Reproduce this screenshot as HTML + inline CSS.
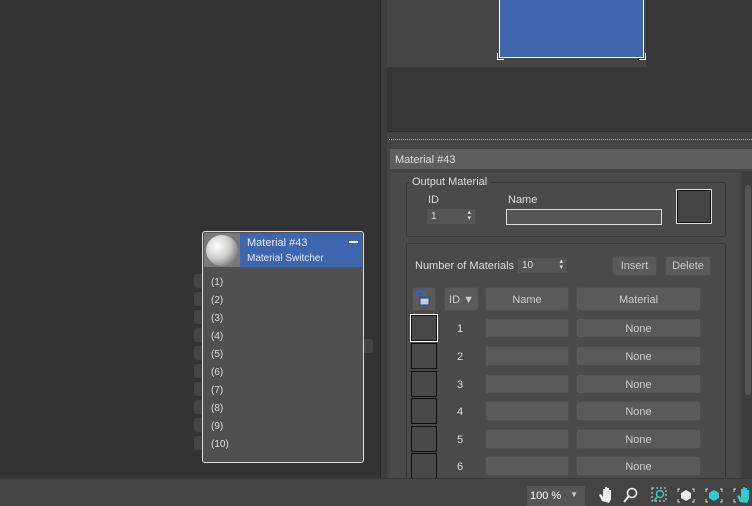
<!DOCTYPE html>
<html><head><style>
*{margin:0;padding:0;box-sizing:border-box}
body{width:752px;height:506px;overflow:hidden;background:#333;font-family:"Liberation Sans",sans-serif;font-size:11px;color:#ddd;position:relative}
.a{position:absolute}
.btn{position:absolute;background:#5a5a5a;border:1px solid #4e4e4e;border-radius:3px;text-align:center;color:#ccc;font-size:11px}
.sq{position:absolute;width:26px;height:26px;border:1px solid #111;background:#484848}
.lbl{position:absolute;font-size:10px;color:#ddd}
.sock{position:absolute;left:194px;width:9px;height:14px;background:#444;border-radius:3px 0 0 3px}
</style></head><body>
<div class="a" style="left:0;top:0;width:380px;height:478px;background:#333"></div>
<div class="a" style="left:380px;top:0;width:7px;height:478px;background:#3d3d3d;border-left:1px solid #2a2a2a"></div>
<div class="a" style="left:387px;top:0;width:365px;height:132px;background:#373737;border-bottom:1px solid #2b2b2b"></div>
<div class="a" style="left:387px;top:0;width:259px;height:67px;background:#454545"></div>
<div class="a" style="left:499px;top:0;width:145px;height:58px;background:#3f66ac;border:1px solid #fff;border-top:none"></div>
<div class="a" style="left:497px;top:53px;width:7px;height:7px;border-left:1px solid #fff;border-bottom:1px solid #fff"></div>
<div class="a" style="left:639px;top:53px;width:7px;height:7px;border-right:1px solid #fff;border-bottom:1px solid #fff"></div>
<div class="a" style="left:387px;top:132px;width:365px;height:346px;background:#444"></div>
<div class="a" style="left:389px;top:139px;width:363px;height:1px;border-top:1px dotted #aaa"></div>
<div class="a" style="left:390px;top:149px;width:362px;height:20px;background:#5e5e5e;color:#ddd;padding:5px 5px;font-size:11px">Material #43</div>
<div class="a" style="left:390px;top:172px;width:350px;height:306px;background:#4a4a4a"></div>
<div class="a" style="left:742px;top:172px;width:10px;height:306px;background:#3e3e3e"></div>
<div class="a" style="left:745px;top:185px;width:6px;height:210px;background:#555;border-radius:3px"></div>
<div class="a" style="left:406px;top:182px;width:320px;height:55px;border:1px solid #363636;border-radius:3px"></div>
<div class="a" style="left:409px;top:176px;background:#4a4a4a;padding:0 3px;font-size:11px">Output Material</div>
<div class="lbl" style="left:428px;top:194px;font-size:11px">ID</div>
<div class="lbl" style="left:508px;top:194px;font-size:11px">Name</div>
<div class="a" style="left:427px;top:209px;width:48px;height:15px;background:#555;font-size:10px;padding:2px 4px">1<span style="position:absolute;right:4px;top:1px;font-size:7px;line-height:6px">▴<br>▾</span></div>
<div class="a" style="left:506px;top:209px;width:156px;height:16px;background:#555;border:1px solid #ddd"></div>
<div class="a" style="left:676px;top:189px;width:36px;height:35px;border:1px solid #ddd;background:#444;outline:1px solid #111;outline-offset:-2px"></div>
<div class="a" style="left:406px;top:243px;width:320px;height:240px;border:1px solid #363636;border-radius:3px"></div>
<div class="a" style="left:415px;top:260px;font-size:11px">Number of Materials</div>
<div class="a" style="left:518px;top:258px;width:49px;height:15px;background:#555;font-size:10px;padding:2px 4px">10<span style="position:absolute;right:4px;top:1px;font-size:7px;line-height:6px">▴<br>▾</span></div>
<div class="btn" style="left:612px;top:256px;width:45px;height:20px;line-height:19px">Insert</div>
<div class="btn" style="left:665px;top:256px;width:46px;height:20px;line-height:19px">Delete</div>
<div class="btn" style="left:412px;top:287px;width:24px;height:24px"><svg width="22" height="22" viewBox="0 0 22 22"><path d="M3 10V7a4 4 0 0 1 8 0v2" fill="none" stroke="#3a5fd0" stroke-width="2"/><rect x="7" y="10" width="9" height="7" fill="#ccc" stroke="#2040b0"/></svg></div>
<div class="btn" style="left:444px;top:287px;width:35px;height:24px;line-height:24px">ID ▼</div>
<div class="btn" style="left:485px;top:287px;width:84px;height:24px;line-height:24px">Name</div>
<div class="btn" style="left:576px;top:287px;width:125px;height:24px;line-height:24px">Material</div>
<div class="sq" style="left:410px;top:314px;border:1px solid #fff;outline:1px solid #111;outline-offset:-2px;width:28px;height:28px"></div>
<div class="sq" style="left:411px;top:343px"></div>
<div class="sq" style="left:411px;top:371px"></div>
<div class="sq" style="left:411px;top:398px"></div>
<div class="sq" style="left:411px;top:426px"></div>
<div class="sq" style="left:411px;top:453px"></div>
<div class="a" style="left:457px;top:323px">1</div>
<div class="a" style="left:457px;top:351px">2</div>
<div class="a" style="left:457px;top:379px">3</div>
<div class="a" style="left:457px;top:406px">4</div>
<div class="a" style="left:457px;top:434px">5</div>
<div class="a" style="left:457px;top:461px">6</div>
<div class="btn" style="left:485px;top:318px;width:84px;height:20px;border-radius:1px"></div>
<div class="btn" style="left:576px;top:318px;width:125px;height:20px;line-height:20px">None</div>
<div class="btn" style="left:485px;top:346px;width:84px;height:20px;border-radius:1px"></div>
<div class="btn" style="left:576px;top:346px;width:125px;height:20px;line-height:20px">None</div>
<div class="btn" style="left:485px;top:374px;width:84px;height:20px;border-radius:1px"></div>
<div class="btn" style="left:576px;top:374px;width:125px;height:20px;line-height:20px">None</div>
<div class="btn" style="left:485px;top:401px;width:84px;height:20px;border-radius:1px"></div>
<div class="btn" style="left:576px;top:401px;width:125px;height:20px;line-height:20px">None</div>
<div class="btn" style="left:485px;top:429px;width:84px;height:20px;border-radius:1px"></div>
<div class="btn" style="left:576px;top:429px;width:125px;height:20px;line-height:20px">None</div>
<div class="btn" style="left:485px;top:456px;width:84px;height:20px;border-radius:1px"></div>
<div class="btn" style="left:576px;top:456px;width:125px;height:20px;line-height:20px">None</div>
<div class="sock" style="top:274px"></div><div class="sock" style="top:292px"></div><div class="sock" style="top:310px"></div><div class="sock" style="top:328px"></div><div class="sock" style="top:346px"></div><div class="sock" style="top:364px"></div><div class="sock" style="top:382px"></div><div class="sock" style="top:400px"></div><div class="sock" style="top:418px"></div><div class="sock" style="top:436px"></div>
<div class="a" style="left:363px;top:339px;width:10px;height:14px;background:#444;border-radius:0 3px 3px 0"></div>
<div class="a" style="left:202px;top:231px;width:162px;height:232px;background:#505050;border:1px solid #ddd;border-radius:3px"></div>
<div class="a" style="left:204px;top:233px;width:36px;height:34px;background:#7a7a7a"><div style="margin:2px;width:32px;height:31px;border-radius:50%;background:radial-gradient(circle at 35% 35%,#fff,#ccc 45%,#777 80%,#999)"></div></div>
<div class="a" style="left:240px;top:233px;width:122px;height:34px;background:#3e66ae;padding:3px 7px;font-size:11px;line-height:15px;color:#e8e8ff">Material #43<br><span style="font-size:10px">Material Switcher</span></div>
<div class="a" style="left:349px;top:241px;width:9px;height:2px;background:#fff"></div>
<div class="a" style="left:211px;top:274px;font-size:10px;line-height:18px;color:#ddd">(1)<br>(2)<br>(3)<br>(4)<br>(5)<br>(6)<br>(7)<br>(8)<br>(9)<br>(10)</div>
<div class="a" style="left:0;top:478px;width:752px;height:28px;background:#444;border-top:1px solid #3a3a3a"></div>
<div class="a" style="left:527px;top:486px;width:58px;height:20px;background:#555;font-size:11px;padding:4px 3px;color:#fff">100 %<span style="position:absolute;right:7px;top:4px;font-size:8px;color:#ccc">▼</span></div>
<svg class="a" style="left:596px;top:485px" width="156" height="20" viewBox="0 0 156 20">
<path d="M6 16l-3-6 2-1 2 3V4h2v6-8h2v8-7h2v7-5h2v9l-2 4z" fill="#eee"/>
<circle cx="36" cy="8" r="4.5" fill="none" stroke="#eee" stroke-width="1.6"/><path d="M33 11l-5 6" stroke="#eee" stroke-width="2"/>
<rect x="56" y="3" width="14" height="13" fill="none" stroke="#ddd" stroke-dasharray="2 2"/><circle cx="64" cy="9" r="3.5" fill="none" stroke="#3cc" stroke-width="1.5"/><path d="M61 12l-3 4" stroke="#3cc" stroke-width="1.6"/>
<path d="M84 4h-2v3M96 4h2v3M84 17h-2v-3M96 17h2v-3" stroke="#ddd" fill="none"/><path d="M90 5l5 3v5l-5 3-5-3V8z" fill="#eee"/>
<path d="M112 4h-2v3M124 4h2v3M112 17h-2v-3M124 17h2v-3" stroke="#ddd" fill="none"/><path d="M118 5l5 3v5l-5 3-5-3V8z" fill="#3cc"/>
<path d="M140 4h-2v3M140 17h-2v-3" stroke="#ddd" fill="none"/><path d="M144 17l-3-6 2-1 2 3V4h2v6-8h2v8-7h2v7-5h2v9l-2 4z" fill="#3cc"/>
</svg>
</body></html>
